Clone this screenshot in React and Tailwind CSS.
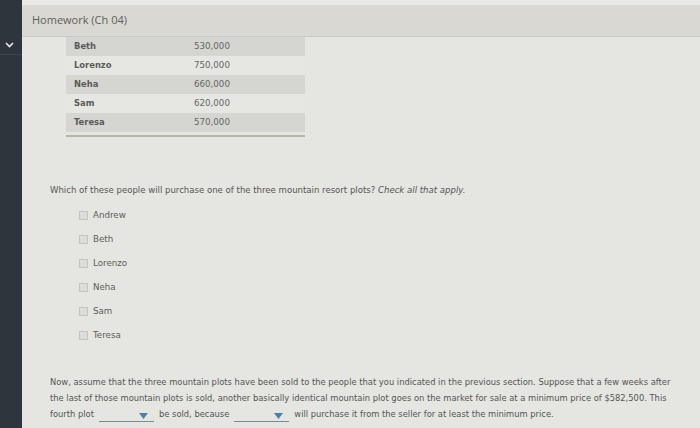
import React from "react";

const rows = [
  { name: "Beth", value: "530,000" },
  { name: "Lorenzo", value: "750,000" },
  { name: "Neha", value: "660,000" },
  { name: "Sam", value: "620,000" },
  { name: "Teresa", value: "570,000" },
];

const people = ["Andrew", "Beth", "Lorenzo", "Neha", "Sam", "Teresa"];

const Dropdown = () => (
  <span className="inline-flex items-end w-[55px] h-[11px] border-b border-[#7d8a96] mx-[5px] justify-end pr-[6px] align-[-2px]">
    <svg width="9" height="6" viewBox="0 0 9 6" className="mb-[2px]">
      <path d="M0 0 L9 0 L4.5 6 Z" fill="#4d7fae" />
    </svg>
  </span>
);

const App = () => {
  return (
    <div
      className="flex w-[700px] h-[428px] overflow-hidden bg-[#e5e5e1] text-[#555]"
      style={{ fontFamily: "'DejaVu Sans', Verdana, sans-serif" }}
    >
      <div className="w-[22px] shrink-0 bg-[#2e353d] flex flex-col">
        <div className="h-[35px]" />
        <div className="h-[20px] flex items-center pl-[5px] border-b border-[#3b434b]">
          <svg width="9" height="6" viewBox="0 0 9 6">
            <path d="M1 1 L4.5 4.5 L8 1" stroke="#e8e8e8" strokeWidth="1.6" fill="none" />
          </svg>
        </div>
      </div>

      <div className="flex-1 flex flex-col">
        <div className="h-[5px] bg-[#e9e9e5]" />
        <div
          className="h-[32px] bg-[#d9d8d3] border-b border-[#c9c9c4] flex items-center pl-[10px] text-[11px] text-[#5e5e5e]"
          style={{ fontFamily: "'Open Sans', sans-serif" }}
        >
          Homework (Ch 04)
        </div>

        <div className="ml-[44px] w-[239px]">
          {rows.map((r, i) => (
            <div
              key={r.name}
              className={`flex items-center h-[19px] text-[8.4px] ${i % 2 === 0 ? "bg-[#d5d5d1]" : "bg-[#e6e6e2]"}`}
            >
              <span className="w-[128px] pl-[8px] font-bold text-[#5a5a5a]">{r.name}</span>
              <span className="text-[8.7px] text-[#666]">{r.value}</span>
            </div>
          ))}
          <div className="h-[2px] mt-[3px] bg-[#b5b5a6]" />
        </div>

        <p className="ml-[28px] mt-[47px] text-[8.55px] text-[#555]">
          Which of these people will purchase one of the three mountain resort plots?{" "}
          <em>Check all that apply.</em>
        </p>

        <div className="ml-[57px] mt-[13px] flex flex-col gap-[13px]">
          {people.map((p) => (
            <label key={p} className="flex items-center h-[11px] text-[8.7px] text-[#5c5c5c]">
              <span className="w-[9px] h-[9px] border border-[#c4c4c0] bg-[#dcdcd8] mr-[5px]" />
              {p}
            </label>
          ))}
        </div>

        <div className="ml-[28px] mt-[33px] text-[8.35px] leading-[16px] text-[#555] whitespace-nowrap">
          Now, assume that the three mountain plots have been sold to the people that you indicated in the previous
          section. Suppose that a few weeks after
          <br />
          the last of those mountain plots is sold, another basically identical mountain plot goes on the market for
          sale at a minimum price of $582,500. This
          <br />
          fourth plot
          <Dropdown />
          be sold, because
          <Dropdown />
          will purchase it from the seller for at least the minimum price.
        </div>
      </div>
    </div>
  );
};

export default App;
